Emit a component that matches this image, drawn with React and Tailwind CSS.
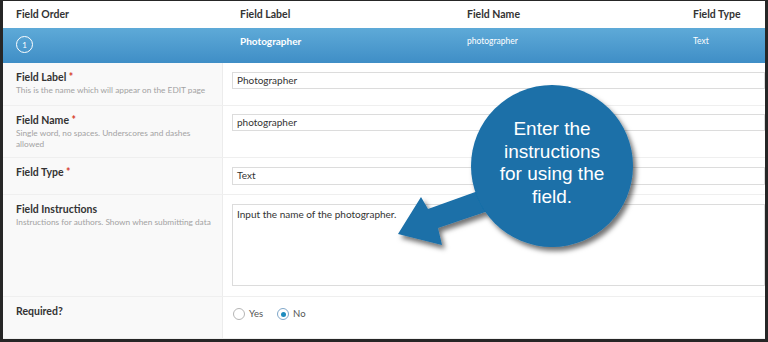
import React from "react";

const font = { fontFamily: "Lato, 'Open Sans', sans-serif" };

function Label({ title, req, desc }) {
  return (
    <div>
      <p className="text-[10.5px] font-bold leading-[13px] text-[#333]">
        {title}
        {req && <span className="text-[#d6392b]"> *</span>}
      </p>
      {desc && <p className="text-[8.3px] leading-[11px] text-[#a3a3a3] mt-[1px]">{desc}</p>}
    </div>
  );
}

function Row({ h, children, label }) {
  return (
    <div className={`flex border-b border-[#efefef] ${h}`}>
      <div className="w-[220px] shrink-0 bg-[#f9f9f9] border-r border-[#ececec] pl-[13px] pr-[3px] pt-[8px]">
        {label}
      </div>
      <div className="flex-1 pl-[9px] pt-[9px]">{children}</div>
    </div>
  );
}

function Input({ value, h = "h-[17px]" }) {
  return (
    <div className={`${h} border border-[#dcdcdc] bg-white px-[4px] text-[10px] leading-[15px] text-[#333]`}>
      {value}
    </div>
  );
}

function Radio({ checked, label }) {
  return (
    <div className="flex items-center gap-[4px]">
      <span
        className={`w-[12px] h-[12px] rounded-full border flex items-center justify-center bg-white ${
          checked ? "border-[#7fa7c9]" : "border-[#b5b5b5]"
        }`}
      >
        {checked && <span className="w-[5px] h-[5px] rounded-full bg-[#1e8cbe]" />}
      </span>
      <span className="text-[9.5px] text-[#555]">{label}</span>
    </div>
  );
}

export default function App() {
  return (
    <div className="w-[768px] h-[342px] bg-[#262626] pl-[3px] pr-[3px] pt-[1px] pb-[3px] relative" style={font}>
      <div className="bg-white w-full h-full overflow-hidden">
        {/* header */}
        <div className="grid grid-cols-[237px_227px_226px_1fr] h-[27px] items-center text-[10.5px] font-bold text-[#333]">
          <span className="pl-[13px]">Field Order</span>
          <span>Field Label</span>
          <span>Field Name</span>
          <span>Field Type</span>
        </div>

        {/* selected field bar */}
        <div className="grid grid-cols-[237px_227px_226px_1fr] h-[35px] bg-gradient-to-b from-[#5eaad8] to-[#3f8ec6] text-white">
          <div className="pl-[13px] pt-[8px]">
            <span className="w-[17px] h-[17px] rounded-full border border-white flex items-center justify-center text-[8px]">
              1
            </span>
          </div>
          <span className="pt-[6px] text-[10px] font-bold">Photographer</span>
          <span className="pt-[7px] text-[8.5px]">photographer</span>
          <span className="pt-[7px] text-[8.5px]">Text</span>
        </div>

        <Row h="h-[43px]" label={<Label title="Field Label" req desc="This is the name which will appear on the EDIT page" />}>
          <Input value="Photographer" />
        </Row>
        <Row h="h-[52px]" label={<Label title="Field Name" req desc="Single word, no spaces. Underscores and dashes allowed" />}>
          <div className="-mt-[1px] pr-[0px]">
            <Input value="photographer" />
          </div>
        </Row>
        <Row h="h-[37px]" label={<Label title="Field Type" req />}>
          <Input value="Text" h="h-[18px]" />
        </Row>
        <Row h="h-[102px]" label={<Label title="Field Instructions" desc="Instructions for authors. Shown when submitting data" />}>
          <div className="h-[82px] border border-[#dcdcdc] bg-white px-[4px] pt-[2px] text-[10px] leading-[14px] text-[#333]">
            Input the name of the photographer.
          </div>
        </Row>
        <Row h="h-[42px]" label={<Label title="Required?" />}>
          <div className="flex items-center gap-[14px] pt-[1px] pl-[1px]">
            <Radio label="Yes" />
            <Radio checked label="No" />
          </div>
        </Row>
      </div>

      {/* callout bubble */}
      <svg className="absolute left-0 top-0 pointer-events-none" width="768" height="342" viewBox="0 0 768 342">
        <defs>
          <filter id="sh" x="-20%" y="-20%" width="150%" height="150%">
            <feDropShadow dx="3" dy="4" stdDeviation="2.5" floodColor="#000" floodOpacity="0.55" />
          </filter>
        </defs>
        <g filter="url(#sh)" fill="#1a6fa8">
          <polygon points="398,234 421,197 428,209 492,186 497,208 438,228 442,245" />
          <circle cx="552" cy="166" r="81" />
        </g>
      </svg>
      <div
        className="absolute left-[472px] top-[118px] w-[160px] text-center text-white text-[19px] leading-[22.5px]"
        style={{ fontFamily: "'Liberation Sans', Arial, sans-serif" }}
      >
        Enter the
        <br />
        instructions
        <br />
        for using the
        <br />
        field.
      </div>
    </div>
  );
}
